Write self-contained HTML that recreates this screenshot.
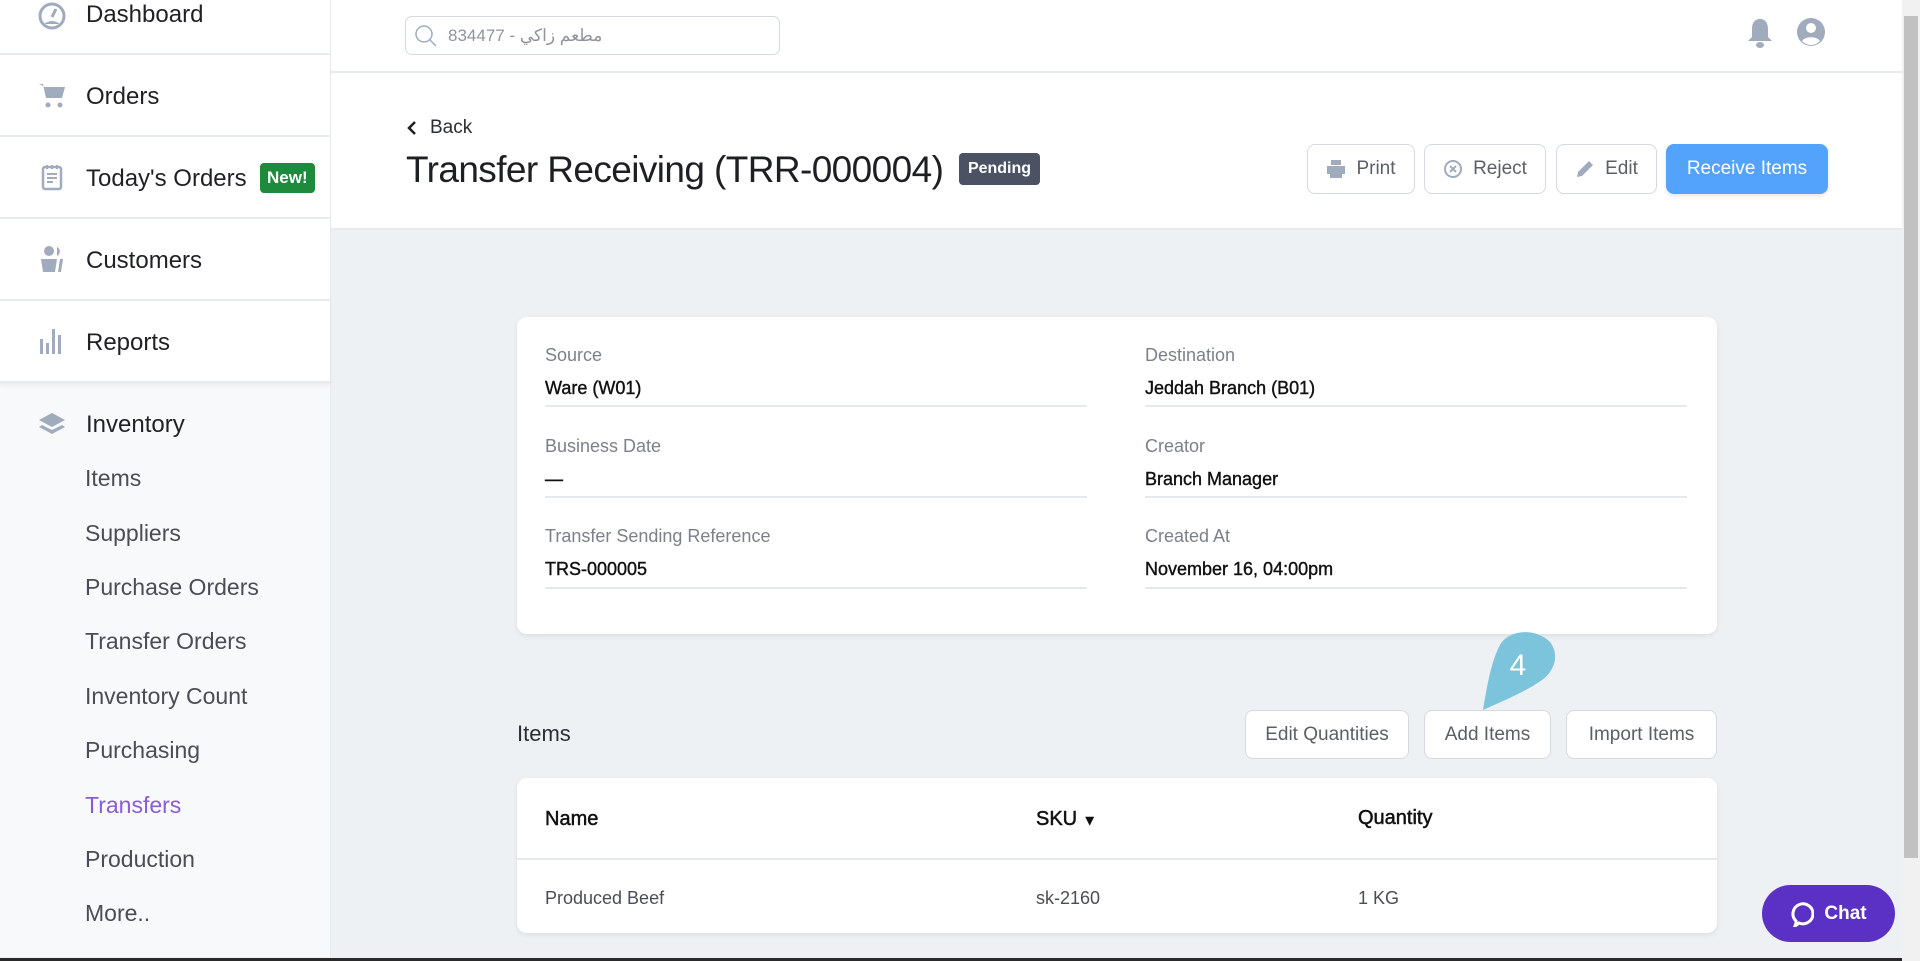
<!DOCTYPE html>
<html><head><meta charset="utf-8"><style>
*{box-sizing:border-box;margin:0;padding:0}
body{width:1920px;height:961px;overflow:hidden;background:#eef1f4;font-family:"Liberation Sans","Noto Sans CJK SC",sans-serif;color:#1d1f23;position:relative}
.abs{position:absolute}
.side{left:0;top:0;width:331px;height:957px;background:#f7f9fb;border-right:1px solid #e6e9ee}
.si{position:absolute;left:0;width:330px;background:#fff;border-bottom:2px solid #e7eaef;display:flex;align-items:center;font-size:24px;color:#1f2126}
.si .ic{position:absolute;left:38px;width:28px;height:28px}
.si span.t{position:absolute;left:86px}
.sub{position:absolute;left:85px;font-size:23px;color:#4a4d55}
.top{left:331px;top:0;width:1571px;height:73px;background:#fff;border-bottom:2px solid #e7eaef}
.hdr{left:331px;top:73px;width:1571px;height:157px;background:#fff;border-bottom:2px solid #e7eaef}
.btn{position:absolute;background:#fff;border:1.5px solid #d3dae3;border-radius:8px;font-size:19px;color:#5b5f67;display:flex;align-items:center;justify-content:center;gap:10px}
.card{position:absolute;background:#fff;border-radius:10px;box-shadow:0 2px 6px rgba(0,0,0,.08)}
.lbl{position:absolute;font-size:18px;color:#7c8089}
.val{position:absolute;font-size:18px;color:#111;-webkit-text-stroke:0.4px #111}
.ln{position:absolute;height:1.5px;background:#e5e8ec;width:542px}
</style></head><body>
<div class="abs side"></div>
<div class="si" style="top:-2px;height:57px"><svg class="ic" style="top:4px" viewBox="0 0 28 28"><circle cx="14" cy="14" r="12" fill="none" stroke="#a0abbd" stroke-width="3"/><path d="M14 15 L18 7" stroke="#a0abbd" stroke-width="3"/><path d="M6 22 Q14 16 22 22" fill="#a0abbd"/></svg><span class="t" style="top:3px">Dashboard</span></div>
<div class="si" style="top:55px;height:82px"><svg class="ic" viewBox="0 0 28 28"><path d="M1 3h4l3 14h16l3-11H7" fill="#a0abbd"/><circle cx="10" cy="24" r="2.5" fill="#a0abbd"/><circle cx="22" cy="24" r="2.5" fill="#a0abbd"/></svg><span class="t" style="top:28px">Orders</span></div>
<div class="si" style="top:137px;height:82px"><svg class="ic" viewBox="0 0 28 28"><rect x="5" y="4" width="18" height="22" rx="2" fill="none" stroke="#a0abbd" stroke-width="2.5"/><path d="M9 11h10M9 15h10M9 19h6M9 2v4M14 2v4M19 2v4" stroke="#a0abbd" stroke-width="2"/></svg><span class="t" style="top:28px">Today's Orders</span><span style="position:absolute;left:260px;top:26px;background:#1e8a3b;color:#fff;font-size:17px;font-weight:700;padding:5px 7px;border-radius:4px">New!</span></div>
<div class="si" style="top:219px;height:82px"><svg class="ic" viewBox="0 0 28 28"><circle cx="11" cy="6" r="5" fill="#a0abbd"/><path d="M3 14h16l-2 13H5z" fill="#a0abbd"/><path d="M19 2a5 5 0 010 9M22 14h3l-2 13h-3z" fill="#a0abbd"/></svg><span class="t" style="top:28px">Customers</span></div>
<div class="si" style="top:301px;height:82px;box-shadow:0 3px 4px rgba(0,0,0,.05)"><svg class="ic" viewBox="0 0 28 28"><path d="M2 12h3v15H2zM8 16h3v11H8zM14 2h3v25h-3zM20 8h3v19h-3z" fill="#a0abbd"/></svg><span class="t" style="top:28px">Reports</span></div>
<svg class="abs" style="left:38px;top:411px" width="28" height="26" viewBox="0 0 28 26"><path d="M14 2 L27 9 L14 16 L1 9z" fill="#a0abbd"/><path d="M4 14 L14 19 L24 14 L27 16 L14 23 L1 16z" fill="#a0abbd"/></svg>
<div class="abs" style="left:86px;top:411px;font-size:24px;color:#1f2126">Inventory</div>
<div class="sub" style="top:465px">Items</div>
<div class="sub" style="top:520px">Suppliers</div>
<div class="sub" style="top:574px">Purchase Orders</div>
<div class="sub" style="top:628px">Transfer Orders</div>
<div class="sub" style="top:683px">Inventory Count</div>
<div class="sub" style="top:737px">Purchasing</div>
<div class="sub" style="top:792px;color:#8a5cd6">Transfers</div>
<div class="sub" style="top:846px">Production</div>
<div class="sub" style="top:900px">More..</div>

<div class="abs top"></div>
<div class="abs" style="left:405px;top:16px;width:375px;height:39px;border:1.5px solid #d3dae3;border-radius:7px;background:#fff"></div>
<svg class="abs" style="left:414px;top:24px" width="24" height="24" viewBox="0 0 24 24"><circle cx="10" cy="10" r="8" fill="none" stroke="#a0abbd" stroke-width="1.5"/><path d="M16 16l6 6" stroke="#a0abbd" stroke-width="1.5"/></svg>
<div class="abs" style="left:448px;top:26px;font-size:17px;color:#8f949c">834477 - مطعم زاكي</div>
<svg class="abs" style="left:1746px;top:17px" width="28" height="32" viewBox="0 0 28 32"><path d="M14 2c-6 0-8 5-8 10v8l-4 4h24l-4-4v-8c0-5-2-10-8-10z" fill="#a0abbd"/><ellipse cx="14" cy="28" rx="4" ry="3" fill="#a0abbd"/></svg>
<svg class="abs" style="left:1796px;top:16px" width="30" height="32" viewBox="0 0 30 30"><circle cx="15" cy="15" r="14" fill="#a0abbd"/><circle cx="15" cy="11" r="5" fill="#fff"/><path d="M6 24c3-5 15-5 18 0a12 12 0 01-18 0z" fill="#fff"/></svg>

<div class="abs hdr"></div>
<svg class="abs" style="left:406px;top:120px" width="12" height="16" viewBox="0 0 12 16"><path d="M9 2 L3 8 L9 14" fill="none" stroke="#1d1f23" stroke-width="2.5"/></svg>
<div class="abs" style="left:430px;top:117px;font-size:19px;color:#2b2e33">Back</div>
<div class="abs" style="left:406px;top:149px;font-size:37px;color:#1d1f23;letter-spacing:-0.6px">Transfer Receiving (TRR-000004)</div>
<div class="abs" style="left:959px;top:153px;width:81px;height:32px;background:#4a5263;color:#fff;font-size:16px;font-weight:700;border-radius:4px;display:flex;align-items:center;justify-content:center">Pending</div>
<div class="btn" style="left:1307px;top:144px;width:108px;height:50px"><svg width="20" height="20" viewBox="0 0 20 20"><path d="M5 1h10v5H5zM1 7h18v8h-3v4H4v-4H1z" fill="#a0abbd"/></svg>Print</div>
<div class="btn" style="left:1424px;top:144px;width:122px;height:50px"><svg width="20" height="20" viewBox="0 0 20 20"><circle cx="10" cy="10" r="8" fill="none" stroke="#a0abbd" stroke-width="2"/><path d="M7 7l6 6M13 7l-6 6" stroke="#a0abbd" stroke-width="2"/></svg>Reject</div>
<div class="btn" style="left:1556px;top:144px;width:101px;height:50px"><svg width="20" height="20" viewBox="0 0 20 20"><path d="M2 18l1-5L14 2l4 4L7 17z" fill="#a0abbd"/></svg>Edit</div>
<div class="btn" style="left:1666px;top:144px;width:162px;height:50px;background:#53a3fc;border-color:#53a3fc;color:#fff;box-shadow:0 2px 4px rgba(0,0,0,.1)">Receive Items</div>

<div class="card" style="left:517px;top:317px;width:1200px;height:317px"></div>
<div class="lbl" style="left:545px;top:345px">Source</div><div class="val" style="left:545px;top:378px">Ware (W01)</div><div class="ln" style="left:545px;top:405px"></div>
<div class="lbl" style="left:545px;top:436px">Business Date</div><div class="val" style="left:545px;top:469px">—</div><div class="ln" style="left:545px;top:496px"></div>
<div class="lbl" style="left:545px;top:526px">Transfer Sending Reference</div><div class="val" style="left:545px;top:559px">TRS-000005</div><div class="ln" style="left:545px;top:587px"></div>
<div class="lbl" style="left:1145px;top:345px">Destination</div><div class="val" style="left:1145px;top:378px">Jeddah Branch (B01)</div><div class="ln" style="left:1145px;top:405px"></div>
<div class="lbl" style="left:1145px;top:436px">Creator</div><div class="val" style="left:1145px;top:469px">Branch Manager</div><div class="ln" style="left:1145px;top:496px"></div>
<div class="lbl" style="left:1145px;top:526px">Created At</div><div class="val" style="left:1145px;top:559px">November 16, 04:00pm</div><div class="ln" style="left:1145px;top:587px"></div>

<div class="abs" style="left:517px;top:721px;font-size:22px;color:#2b2e33">Items</div>
<div class="btn" style="left:1245px;top:710px;width:164px;height:49px">Edit Quantities</div>
<div class="btn" style="left:1424px;top:710px;width:127px;height:49px">Add Items</div>
<div class="btn" style="left:1566px;top:710px;width:151px;height:49px">Import Items</div>
<svg class="abs" style="left:1480px;top:630px" width="76" height="82" viewBox="0 0 76 82"><path d="M3 80 C8 50 12 30 20 15 C28 0 55 -3 70 12 C82 28 70 45 62 50 C45 62 25 70 3 80z" fill="#7bc4dc"/><text x="38" y="45" font-family="Liberation Sans" font-size="30" fill="#fff" text-anchor="middle">4</text></svg>

<div class="card" style="left:517px;top:778px;width:1200px;height:155px"></div>
<div class="abs" style="left:545px;top:808px;font-size:20px;-webkit-text-stroke:0.5px #111;color:#111">Name</div>
<div class="abs" style="left:1036px;top:808px;font-size:20px;-webkit-text-stroke:0.5px #111;color:#111">SKU <span style="font-size:14px">▼</span></div>
<div class="abs" style="left:1358px;top:807px;font-size:20px;-webkit-text-stroke:0.5px #111;color:#111">Quantity</div>
<div class="abs" style="left:517px;top:858px;width:1200px;height:1.5px;background:#e5e8ec"></div>
<div class="abs" style="left:545px;top:888px;font-size:18px;color:#4a4d55">Produced Beef</div>
<div class="abs" style="left:1036px;top:888px;font-size:18px;color:#4a4d55">sk-2160</div>
<div class="abs" style="left:1358px;top:888px;font-size:18px;color:#4a4d55">1 KG</div>

<div class="abs" style="left:1762px;top:885px;width:133px;height:57px;background:#5a31c4;border-radius:29px;color:#fff;font-size:19px;font-weight:700;display:flex;align-items:center;justify-content:center;gap:10px"><svg width="24" height="26" viewBox="0 0 24 26"><path d="M6 22 L5 25 L9 22 A10 10 0 1 0 6 20z" fill="none" stroke="#fff" stroke-width="3"/></svg>Chat</div>

<div class="abs" style="left:1902px;top:0;width:18px;height:961px;background:#f1f1f1"></div>
<div class="abs" style="left:1904px;top:16px;width:14px;height:842px;background:#c1c1c1"></div>
<div class="abs" style="left:0;top:958px;width:1902px;height:3px;background:#2a2a2a"></div>
</body></html>
